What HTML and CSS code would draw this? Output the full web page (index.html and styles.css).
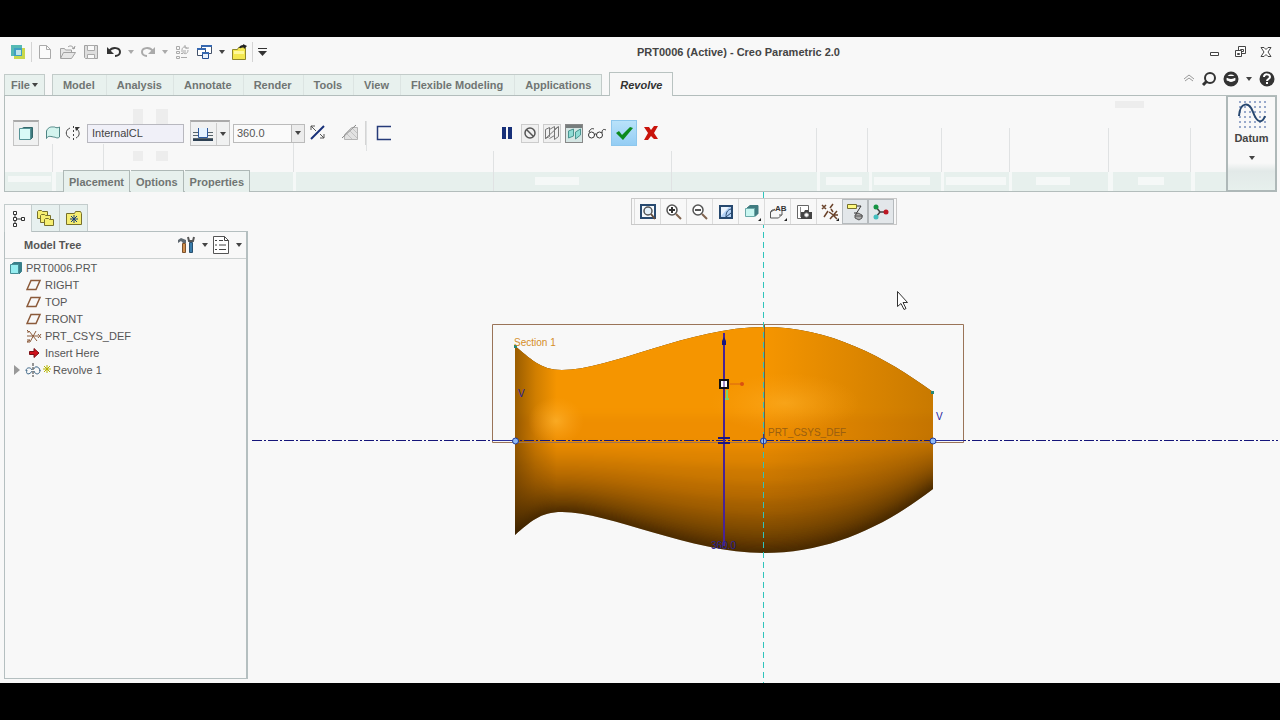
FILE: index.html
```html
<!DOCTYPE html>
<html lang="en">

<head>
  <meta charset="UTF-8">
  <meta name="viewport" content="width=device-width, initial-scale=1.0">
  <title>PRT0006 (Active) - Creo Parametric 2.0</title>
  <link rel="stylesheet" href="styles.css">
</head>

<body>
  <div class="app">

    <header class="title-bar">
      <div class="quick-access">
        <button class="icon-btn" aria-label="Application menu">
          <svg width="16" height="16" viewBox="0 0 16 16"><path fill="#55b9b4" d="M1 1h11v11H1z" /><path fill="#c8d84c" d="M12 4h3v11H4v-3h8z" /><path fill="#3f9fc4" d="M4 4h8v8H4z" /><path fill="#bfe4ea" d="M6 6h5v5H6z" /></svg>
        </button>
        <span class="divider"></span>
        <button class="icon-btn" aria-label="New">
          <svg width="16" height="16" viewBox="0 0 16 16"><path fill="#fbfbfb" stroke="#aaa" d="M2.500 1.500h7l4 4v9h-11z" /><path fill="none" stroke="#aaa" d="M9.500 1.500v4h4" /></svg>
        </button>
        <button class="icon-btn" aria-label="Open">
          <svg width="18" height="16" viewBox="0 0 18 16"><path fill="#e6e6e6" stroke="#a2a2a2" d="M1.500 14V4.500h4l1 1.500h6v3M1.500 14.500l3-6h12l-4 6z" /><path fill="none" stroke="#999" d="M9 3c2-2 5-1 6 2M13 4l2 1 1-3" /></svg>
        </button>
        <button class="icon-btn" aria-label="Save">
          <svg width="16" height="16" viewBox="0 0 16 16"><path fill="#dedede" stroke="#a2a2a2" d="M1.500 1.500h13v13h-12l-1-1z" /><path fill="#fafafa" stroke="#aaa" d="M4.500 1.500h7v5h-7zM4.500 10.500h7v4h-7z" /></svg>
        </button>
        <button class="icon-btn" aria-label="Undo">
          <svg width="16" height="16" viewBox="0 0 16 16"><path fill="none" stroke="#333" stroke-width="2" d="M3 7c4-5 11-3 11 1 0 2-2 4-5 4" /><path fill="#333" d="M1 3v7h7z" /></svg>
        </button>
        <button class="caret muted" aria-label="Undo list"></button>
        <button class="icon-btn" aria-label="Redo">
          <svg width="16" height="16" viewBox="0 0 16 16"><path fill="none" stroke="#aaa" stroke-width="2" d="M13 7C9 2 2 4 2 8c0 2 2 4 5 4" /><path fill="#aaa" d="M15 3v7H8z" /></svg>
        </button>
        <button class="caret muted" aria-label="Redo list"></button>
        <button class="icon-btn" aria-label="Regenerate">
          <svg width="16" height="16" viewBox="0 0 16 16"><path fill="none" stroke="#aaa" d="M2.500 2.500h3v3h-3zM2.500 7.500h3v2h-3zM2.500 12.500h3v2h-3zM7 13.500h6M7 9.500h2M8 6c0-4 5-4 5-1M14 6c0 5-5 4-5 2M11 4h4M7 7h3M11 1v3M11 9V6" /></svg>
        </button>
        <button class="icon-btn" aria-label="Windows">
          <svg width="18" height="16" viewBox="0 0 18 16"><path fill="#fff" stroke="#44536b" d="M5.500 1.500h10v8h-10z" /><path fill="#3668b0" d="M5 1h11v2H5z" /><path fill="#fff" stroke="#44536b" d="M1.500 4.500h8v7h-8z" /><path fill="#3668b0" d="M1 4h9v2H1z" /><path fill="#e9f1fb" stroke="#264f94" d="M6.500 8.500h6v6h-6z" /><path fill="#3668b0" d="M6 8h7v2H6z" /></svg>
        </button>
        <button class="caret" aria-label="Windows list"></button>
        <button class="icon-btn" aria-label="Close window">
          <svg width="17" height="17" viewBox="0 0 17 17"><path fill="#f4e84f" stroke="#8e862b" d="M1.500 5.500h5l1-2h7v12h-13z" /><path fill="#fff99a" d="M3 7h10v3H3z" /><path fill="none" stroke="#222" stroke-width="2" d="M9 4c1-3 3-2 5-2" /><path fill="#222" d="M12 0l4 2-3 3z" /></svg>
        </button>
        <span class="divider"></span>
        <button class="customize" aria-label="Customize toolbar">
          <svg width="9" height="8" viewBox="0 0 9 8"><path stroke="#333" d="M0 .500h9" /><path fill="#333" d="M0 3h9L4.500 8z" /></svg>
        </button>
      </div>
      <h1 class="title">PRT0006 (Active) - Creo Parametric 2.0</h1>
      <div class="window-controls">
        <button class="icon-btn" aria-label="Minimize">
          <svg width="12" height="12" viewBox="0 0 12 12"><path fill="#fff" stroke="#444" d="M2.500 6.500h8v3h-8z" /></svg>
        </button>
        <button class="icon-btn" aria-label="Restore">
          <svg width="12" height="12" viewBox="0 0 12 12"><path fill="#fff" stroke="#444" d="M4.500.500h7v7h-7zM6.500 3.500h3v2h-3z" /><path fill="#fff" stroke="#444" d="M1.500 4.500h6v6h-6zM3.500 7.500h2v1h-2z" /></svg>
        </button>
        <button class="icon-btn" aria-label="Close">
          <svg width="12" height="12" viewBox="0 0 12 12"><path fill="#fff" stroke="#444" d="M1 1.500h3l2 2 2-2h3L8 6l3 4.500H8l-2-2-2 2H1L4 6z" /></svg>
        </button>
      </div>
    </header>

    <div class="ribbon-tabs">
      <button class="tab file-tab">File<i class="caret"></i></button>
      <nav class="tab-group">
        <button class="tab">Model</button>
        <button class="tab">Analysis</button>
        <button class="tab">Annotate</button>
        <button class="tab">Render</button>
        <button class="tab">Tools</button>
        <button class="tab">View</button>
        <button class="tab">Flexible Modeling</button>
        <button class="tab">Applications</button>
      </nav>
      <button class="tab active">Revolve</button>
      <div class="help-tools">
        <button class="icon-btn" aria-label="Minimize ribbon">
          <svg width="12" height="12" viewBox="0 0 12 12"><path fill="none" stroke="#999" d="M1 6l5-4 5 4M2 8l4-3 4 3" /></svg>
        </button>
        <button class="icon-btn" aria-label="Search">
          <svg width="16" height="16" viewBox="0 0 16 16"><circle cx="9" cy="7" r="5" fill="none" stroke="#333" stroke-width="2" /><path stroke="#333" stroke-width="3" d="M6 10l-4 4" /></svg>
        </button>
        <button class="icon-btn" aria-label="Learning center">
          <svg width="16" height="16" viewBox="0 0 16 16"><circle cx="8" cy="8" r="6" fill="#fff" stroke="#333" stroke-width="3" /><path fill="#333" d="M2 5h12v2c-3-1-3 1-6 1S5 6 2 7zM3 10c3-1 3 1 5 1s3-2 5-1l-3 4H5z" /></svg>
        </button>
        <button class="caret" aria-label="Learning list"></button>
        <button class="icon-btn" aria-label="Help">
          <svg width="16" height="16" viewBox="0 0 16 16"><circle cx="8" cy="8" r="7.500" fill="#333" /><path fill="none" stroke="#fff" stroke-width="2" d="M5 6c0-4 6-3 6 0 0 2-3 2-3 4" /><path fill="#fff" d="M7 11h2v2H7z" /></svg>
        </button>
      </div>
    </div>

    <section class="ribbon">
      <!-- faded group separators behind the dashboard -->
      <svg class="ribbon-ghost" viewBox="0 0 1272 95" preserveAspectRatio="none" aria-hidden="true">
        <g fill="#ededed"><path d="M128 13h10v18h-10zM151 13h12v18h-12zM128 55h10v10h-10zM151 55h12v10h-12zM1110 5h29v7h-29z" /></g>
        <g stroke="#e0e2e3"><path d="M47.500 48v28M98.500 48v28M288.500 34v42M361.500 25v30M488.500 55v40M666.500 55v40M811.500 32v44M862.500 32v44M936.500 32v44M1004.500 32v44M1103.500 32v44M1185.500 32v44" /></g>
        <g fill="#f5f8f7"><path d="M3 80h43v6H3zM530 81h44v8h-44zM821 81h36v8h-36zM869 81h56v8h-56zM941 81h60v8h-60zM1031 81h34v8h-34zM1133 81h26v8h-26zM47 76h4v19h-4zM288 76h3v19h-3zM812 76h3v19h-3zM864 76h3v19h-3zM936 76h3v19h-3zM1004 76h3v19h-3zM1103 76h5v19h-5zM1186 76h4v19h-4z" /></g>
      </svg>
      <div class="dashboard">
        <div class="feature-tools">
          <button class="boxed" aria-label="Solid">
            <svg width="16" height="16" viewBox="0 0 16 16"><path fill="#407b80" stroke="#35686b" d="M3.500 3l2-1.500h9v10l-2 2" /><path fill="#d9fbf7" stroke="#569396" d="M1.500 2.500h11v11h-11z" /></svg>
          </button>
          <button class="icon-btn surface" aria-label="Surface">
            <svg width="16" height="16" viewBox="0 0 16 16"><path fill="#d3f4ee" stroke="#4e8584" d="M1.500 13.500V6c2-5 6-4 8-4 2 1 3 1 5 0v10c-2 2-4 0-6 0-4-1-6-1-7 1.500z" /></svg>
          </button>
          <button class="icon-btn" aria-label="Revolve type">
            <svg width="16" height="16" viewBox="0 0 16 16"><path fill="none" stroke="#444" d="M5 3C0 5 0 11 5 13M8.500 1v2m0 2v2m0 2v2m0 2v2M11 13c4-2 4-6 1-9" /><path fill="#333" d="M10 2h5l-4 4z" /></svg>
          </button>
          <input class="axis-input" type="text" value="InternalCL" aria-label="Axis of revolution">
          <div class="boxed split">
            <button class="icon-btn" aria-label="Angle option">
              <svg width="22" height="16" viewBox="0 0 22 16"><path stroke="#58666c" d="M1 6.500h5M16 6.500h5M1 9.500h5M16 9.500h5M1 12.500h20" /><path fill="#e6f3ff" stroke="#2c5aa0" d="M6.500 2v9.500h9V2" /><path stroke="#2d4053" stroke-width="2" d="M1 14h20" /></svg>
            </button>
            <button class="caret" aria-label="Angle option list"></button>
          </div>
          <div class="combo">
            <select class="angle-select" aria-label="Angle">
              <option>360.0</option>
            </select>
            <span class="combo-arrow"><i class="caret"></i></span>
          </div>
          <button class="icon-btn" aria-label="Flip direction">
            <svg width="18" height="18" viewBox="0 0 18 18"><path stroke="#173079" stroke-width="2" d="M2 15L15 2" /><path fill="none" stroke="#555" d="M2 2l5 5M2 6V2h4M11 10l4 4M15 10v4h-4" /></svg>
          </button>
          <button class="icon-btn cut" aria-label="Remove material">
            <svg width="18" height="18" viewBox="0 0 18 18"><path fill="#e2e2e2" stroke="#b5b5b5" d="M3.500 15.500v-5l7-7h6v12z" /><path stroke="#c3c3c3" d="M6 10l5 5M9 7l7 7M12 5l4 4" /><path stroke="#888" d="M1 14L15 1" /></svg>
          </button>
          <span class="divider"></span>
          <button class="icon-btn" aria-label="Thicken sketch">
            <svg width="16" height="16" viewBox="0 0 16 16"><path fill="none" stroke="#263b79" stroke-width="1.500" d="M15 1.500H1.500v13H15" /></svg>
          </button>
        </div>
        <div class="confirm-tools">
          <button class="icon-btn" aria-label="Pause">
            <svg width="14" height="14" viewBox="0 0 14 14"><path fill="#173079" d="M2 1h4v12H2zM8 1h4v12H8z" /></svg>
          </button>
          <button class="preview" aria-label="No preview">
            <svg width="16" height="16" viewBox="0 0 16 16"><circle cx="8" cy="8" r="5" fill="none" stroke="#555" stroke-width="1.500" /><path stroke="#555" stroke-width="1.500" d="M4.500 4.500l7 7" /></svg>
          </button>
          <button class="preview" aria-label="Unattached preview">
            <svg width="16" height="16" viewBox="0 0 16 16"><path fill="none" stroke="#777" d="M1.500 4.500l4-2v9l-4 2zM5.500 4.500l5-3v9l-5 3M10.500 4.500l4-3v10l-4 3zM1 14L14 2" /></svg>
          </button>
          <button class="preview selected" aria-label="Attached preview">
            <svg width="16" height="16" viewBox="0 0 16 16"><path fill="#777d7d" d="M0 0h16v3H0z" /><path fill="#8fdcd5" stroke="#4b9490" d="M2.500 6l5-2v7l-5 2zM9.500 7l5-3v6l-5 4z" /></svg>
          </button>
          <button class="icon-btn glasses" aria-label="Verify">
            <svg width="20" height="14" viewBox="0 0 20 14"><circle cx="4.500" cy="9" r="3" fill="#fff" stroke="#333" /><circle cx="12.500" cy="9" r="3" fill="#fff" stroke="#333" /><path fill="none" stroke="#333" d="M2 6c1-3 3-4 5-3M7.500 9c1-2 2-1 2 0M15 7c0-4 2-4 4-3" /></svg>
          </button>
          <button class="accept" aria-label="OK">
            <svg width="18" height="16" viewBox="0 0 18 16"><path fill="#0b8a1d" d="M1 8l3-2 3 4 8-8 3 1L8 15z" /></svg>
          </button>
          <button class="icon-btn" aria-label="Cancel">
            <svg width="16" height="16" viewBox="0 0 16 16"><path fill="#c9140c" d="M1 2h5l2 3 3-4h4l-4 7 4 6h-4l-3-3-3 4H1l4-7z" /></svg>
          </button>
        </div>
      </div>
      <div class="sub-tabs">
        <button class="sub-tab">Placement</button>
        <button class="sub-tab">Options</button>
        <button class="sub-tab">Properties</button>
      </div>
      <button class="datum">
        <svg width="28" height="28" viewBox="0 0 28 28"><path stroke="#98a9cb" stroke-width="2" stroke-dasharray="2 3" d="M1 2h27M1 7h27M1 12h27M1 17h27M1 22h27M1 27h27" /><path fill="none" stroke="#27476f" stroke-width="2" d="M1 16C2 2 11 1 15 12s9 12 12 4" /></svg>
        <span>Datum</span>
        <i class="caret"></i>
      </button>
    </section>

    <main class="workspace">
      <aside class="navigator">
        <div class="nav-tabs">
          <button class="nav-tab active" aria-label="Model Tree">
            <svg width="16" height="18" viewBox="0 0 16 18"><path fill="#fff" stroke="#333" d="M3.500 1.500h3v3h-3zM3.500 7.500h3v3h-3zM3.500 13.500h3v3h-3zM11.500 7.500h3v3h-3zM5 4.500v3M5 10.500v3M6.500 9h5" /></svg>
          </button>
          <button class="nav-tab" aria-label="Folder Browser">
            <svg width="20" height="18" viewBox="0 0 20 18"><g fill="#f6ee71" stroke="#77702b"><path d="M1.500 2.500l1-1h3l1 1h5v7h-10z" /><path d="M4.500 6.500l1-1h3l1 1h5v7h-10z" /><path d="M8.500 10.500l1-1h3l1 1h4v6h-9z" /></g></svg>
          </button>
          <button class="nav-tab" aria-label="Favorites">
            <svg width="18" height="16" viewBox="0 0 18 16"><path fill="#f6ee71" stroke="#77702b" d="M1.500 14.500v-11h8l1-2h5l1 2v11z" /><path stroke="#143c7e" d="M9 5v8M5 9h8M6 6l6 6M12 6l-6 6" /></svg>
          </button>
        </div>
        <div class="tree-panel">
          <div class="tree-header">
            <h2>Model Tree</h2>
            <button class="icon-btn" aria-label="Tree settings">
              <svg width="18" height="18" viewBox="0 0 18 18"><path fill="#5e6870" d="M1 4l3-2 5 2v3H6L4 5 1 7z" /><path fill="#d1904f" stroke="#7c522d" d="M5.500 7.500h3v9h-3z" /><path fill="#397cab" stroke="#28506f" d="M12.500 6.500h3v10h-3z" /><path fill="none" stroke="#555" stroke-width="2" d="M11 1l1 4h4l1-4" /></svg>
            </button>
            <button class="caret" aria-label="Settings list"></button>
            <button class="icon-btn" aria-label="Show">
              <svg width="16" height="18" viewBox="0 0 16 18"><path fill="#fff" stroke="#555" d="M.500.500h11l4 4v13H.500z" /><path fill="none" stroke="#444" d="M11.500.500v4h4M2 4.500h2M6 4.500h4M2 9h2M6 9h7M2 13.500h2M6 13.500h7" /></svg>
            </button>
            <button class="caret" aria-label="Show list"></button>
          </div>
          <ul class="tree">
            <li class="root">
              <svg width="14" height="14" viewBox="0 0 14 14"><path fill="#377e89" stroke="#377e89" d="M3 3l2-1.500h7.500v9L10 13" /><path fill="#95edf0" stroke="#468f97" d="M1.500 3.500h8v9h-8z" /></svg>
              PRT0006.PRT
            </li>
            <li>
              <svg width="16" height="14" viewBox="0 0 16 14"><path fill="none" stroke="#8b5a3a" stroke-width="1.500" d="M5 2.500h9l-4 9H1z" /></svg>
              RIGHT
            </li>
            <li>
              <svg width="16" height="14" viewBox="0 0 16 14"><path fill="none" stroke="#8b5a3a" stroke-width="1.500" d="M5 2.500h9l-4 9H1z" /></svg>
              TOP
            </li>
            <li>
              <svg width="16" height="14" viewBox="0 0 16 14"><path fill="none" stroke="#8b5a3a" stroke-width="1.500" d="M5 2.500h9l-4 9H1z" /></svg>
              FRONT
            </li>
            <li>
              <svg width="16" height="14" viewBox="0 0 16 14"><path fill="none" stroke="#8b5a3a" d="M1 7h11M3 2l8 10M10 2L4 13M1 1l2 2M1 3h2M1 11h3l-3 2h3M12 5l3 4M15 5l-3 4" /></svg>
              PRT_CSYS_DEF
            </li>
            <li>
              <svg width="16" height="14" viewBox="0 0 16 14"><path fill="#d0121b" stroke="#7b1015" d="M3.500 5.500H8v-3l5 4.500-5 4.500v-3H3.500z" /></svg>
              Insert Here
            </li>
            <li class="branch">
              <svg width="8" height="10" viewBox="0 0 8 10"><path fill="#999" d="M1 0l6 5-6 5z" /></svg>
              <svg width="16" height="14" viewBox="0 0 16 14"><path fill="none" stroke="#376184" d="M1 8c0-4 5-4 6-1M15 7c0 5-5 5-6 1M2 7c-2 6 4 4 5 1M9 6c1-4 6-2 6 2" /><path stroke="#333" stroke-dasharray="3 1" d="M8 0v14" /></svg>
              <svg class="new-mark" width="8" height="12" viewBox="0 0 8 12"><path stroke="#b5b400" d="M4 1v8M0 5h8M1 2l6 6M7 2L1 8" /></svg>
              Revolve 1
            </li>
          </ul>
        </div>
      </aside>

      <div class="viewport">
        <svg class="scene" viewBox="248 192 1032 491" role="img" aria-label="Revolved part">
          <defs>
            <clipPath id="body-clip">
              <path d="M515 346C530 358 540 370 562 370C610 370 690 327 764 327C830 327 885 357 933 392V489C885 526 830 553 764 553C690 553 610 512 562 512C540 512 530 522 515 535Z" />
            </clipPath>
            <path id="band" d="M480 -500H970V465L933 489C885 526 830 553 764 553C690 553 610 512 562 512C540 512 530 522 515 535L480 560Z" />
            <filter id="soft" x="-10%" y="-10%" width="120%" height="120%">
              <feGaussianBlur stdDeviation="5" />
            </filter>
            <linearGradient id="ends">
              <stop offset="0" stop-color="#2b1800" stop-opacity=".45" />
              <stop offset=".05" stop-color="#2b1800" stop-opacity=".18" />
              <stop offset=".1" stop-color="#2b1800" stop-opacity="0" />
              <stop offset=".6" stop-color="#2b1800" stop-opacity="0" />
              <stop offset="1" stop-color="#2b1800" stop-opacity=".22" />
            </linearGradient>
            <radialGradient id="glow">
              <stop offset="0" stop-color="#ffb632" stop-opacity=".7" />
              <stop offset="1" stop-color="#ffa41c" stop-opacity="0" />
            </radialGradient>
          </defs>
          <g clip-path="url(#body-clip)">
            <path fill="#462900" d="M510 320h430v240H510z" />
            <g filter="url(#soft)">
              <use href="#band" fill="#5e3600" transform="translate(0 18) scale(1 .96)" />
              <use href="#band" fill="#744400" transform="translate(0 53) scale(1 .88)" />
              <use href="#band" fill="#8b5100" transform="translate(0 97) scale(1 .78)" />
              <use href="#band" fill="#a35f00" transform="translate(0 150) scale(1 .66)" />
              <use href="#band" fill="#b96c00" transform="translate(0 212) scale(1 .52)" />
              <use href="#band" fill="#cc7800" transform="translate(0 273) scale(1 .38)" />
              <use href="#band" fill="#df8400" transform="translate(0 344) scale(1 .22)" />
              <use href="#band" fill="#ef8e00" transform="translate(0 415) scale(1 .06)" />
              <path fill="#f59500" d="M500 300h450v115H500z" />
            </g>
            <path fill="url(#ends)" d="M515 320h418v240H515z" />
            <ellipse cx="556" cy="421" rx="28" ry="24" fill="url(#glow)" />
            <ellipse cx="785" cy="403" rx="75" ry="30" fill="url(#glow)" opacity=".7" />
          </g>
          <path fill="none" stroke="#9a7458" d="M492.500 324.500h471v118h-471z" />
          <path stroke="#2fc4bc" stroke-dasharray="6 4" d="M763.500 192v491" />
          <path stroke="#806035" d="M764.500 325v116" />
          <path stroke="#15157a" stroke-dasharray="10 2 2 2" d="M252 440.500h1026" />
          <path stroke="#2b2f9a" d="M492 440.500h24M933 440.500h31" />
          <path stroke="#4a2392" stroke-width="2" d="M724 333v213" />
          <path fill="#1a1680" d="M724 337l2 4v4h-4v-4z" />
          <path stroke="#1a1680" stroke-width="2" d="M718 438h12M718 443h12" />
          <path fill="#fff" stroke="#111" stroke-width="2" d="M720 380h8v8h-8z" />
          <path stroke="#4a2392" d="M724 381v6" />
          <path stroke="#da6412" d="M730 384h12" />
          <circle cx="742" cy="384" r="2" fill="#da5010" />
          <path stroke="#7ed36b" stroke-width="2" d="M727 390v10M725 399h4" />
          <g fill="#8fb9f4" stroke="#203b98">
            <circle cx="515.500" cy="441" r="3" />
            <circle cx="763.500" cy="441" r="3" />
            <circle cx="933" cy="441" r="3" />
            <path d="M763.500 434v14" />
          </g>
          <path fill="#278879" d="M514 345h3v3h-3zM931 391h3v3h-3z" />
          <text class="label-section" x="514" y="346">Section 1</text>
          <text class="label-csys" x="768" y="436">PRT_CSYS_DEF</text>
          <text class="label-blue" x="518" y="397">V</text>
          <text class="label-blue" x="936" y="420">V</text>
          <text class="label-blue" x="711" y="549">360.0</text>
          <path fill="#fff" stroke="#333" d="M897.500 291.500v15l3.500-3 3 6 2-1-3-6h4.500z" />
        </svg>

        <div class="view-toolbar">
          <button aria-label="Refit">
            <svg width="18" height="18" viewBox="0 0 18 18"><path fill="#f5f9fc" stroke="#27496f" stroke-width="2" d="M2 2h14v13H2z" /><circle cx="9" cy="8" r="4" fill="#e5f2fb" stroke="#555" stroke-width="1.500" /><path stroke="#644c3c" stroke-width="2" d="M12 11l4 5" /></svg>
          </button>
          <button aria-label="Zoom in">
            <svg width="18" height="18" viewBox="0 0 18 18"><circle cx="7" cy="7" r="5" fill="#fff" stroke="#555" stroke-width="1.500" /><path stroke="#333" stroke-width="2" d="M4 7h6M7 4v6" /><path stroke="#80644f" stroke-width="2" d="M11 11l5 5" /></svg>
          </button>
          <button aria-label="Zoom out">
            <svg width="18" height="18" viewBox="0 0 18 18"><circle cx="7" cy="7" r="5" fill="#fff" stroke="#555" stroke-width="1.500" /><path stroke="#555" stroke-width="2" d="M4 7h6" /><path stroke="#80644f" stroke-width="2" d="M11 11l5 5" /></svg>
          </button>
          <button aria-label="Repaint">
            <svg width="16" height="16" viewBox="0 0 16 16"><path fill="#b4d2f6" stroke="#27496f" stroke-width="2" d="M2 2h12v12H2z" /><path fill="#eaf3fd" d="M3 3h8L3 12z" /><path fill="none" stroke="#27496f" d="M13 5c-4 1-5 4-5 8M8 13l5-4" /></svg>
          </button>
          <button aria-label="Display style">
            <svg width="18" height="18" viewBox="0 0 18 18"><path fill="#407b80" stroke="#407b80" d="M4 5l3-2.500h8v8l-3 3" /><path fill="#c9f6f1" stroke="#6aa9a9" d="M2.500 5.500h9v8h-9z" /><path fill="#222" d="M18 15v3h-3z" /></svg>
          </button>
          <button aria-label="Saved orientations">
            <svg width="18" height="18" viewBox="0 0 18 18"><path fill="none" stroke="#555" d="M6 7H3L1.500 9v6h8l3-3M2 9l4-3M13 8v4h-3" /><text x="6" y="8" class="icon-text">AB</text><path fill="#222" d="M18 15v3h-3z" /></svg>
          </button>
          <button aria-label="View manager">
            <svg width="18" height="18" viewBox="0 0 18 18"><path fill="#fff" stroke="#666" d="M2.500 2.500h11v13h-11z" /><path stroke="#888" d="M5.500 4v10" /><path fill="#444" d="M6 9h3l1-2h3l1 2h3v7H6z" /><circle cx="11.500" cy="12" r="2" fill="#fff" stroke="#aaa" /></svg>
          </button>
          <button aria-label="Datum display">
            <svg width="18" height="18" viewBox="0 0 18 18"><path fill="none" stroke="#6a422a" stroke-width="1.500" d="M1 2l4 4M5 2L1 6M12 1L9 5M7 8l-4 6M8 9l3 2 5 5M16 8l-7 8M10 6l2 3M13 12h4" /><path fill="#222" d="M18 15v3h-3z" /></svg>
          </button>
          <button class="on" aria-label="Annotation display">
            <svg width="18" height="18" viewBox="0 0 18 18"><path fill="#fffa80" stroke="#77702b" d="M1.500 1.500h9v4h-9z" /><path fill="none" stroke="#333" d="M11 3h4l-5 8M8 10h3" /><path fill="#aaa" stroke="#555" d="M9 12l3-2 4 2v3l-3 2-4-2zM9 13h8" /></svg>
          </button>
          <button class="on" aria-label="Spin center">
            <svg width="18" height="18" viewBox="0 0 18 18"><path fill="none" stroke="#444" stroke-width="1.500" d="M4 4l4 5h6M8 9l-4 5" /><circle cx="4" cy="4" r="2.500" fill="#159444" /><circle cx="4" cy="14" r="2.500" fill="#42bebe" /><circle cx="14" cy="9" r="2.500" fill="#bc1723" /></svg>
          </button>
        </div>
      </div>
    </main>
  </div>
</body>

</html>
```
FILE: styles.css
```css
* {
  box-sizing: border-box;
  margin: 0;
  padding: 0;
}

body {
  font-family: "Liberation Sans", Arial, sans-serif;
  font-size: 11px;
  line-height: 16px;
  color: #555;
  background-color: #000;
  min-height: 100vh;
  padding: 37px 0;
  display: flex;
}

button {
  font: inherit;
  color: inherit;
  background: none;
  border: none;
}

svg {
  display: block;
  flex-shrink: 0;
}

.app {
  flex: 1;
  display: flex;
  flex-direction: column;
  background-color: #f8f8f8;
}

.icon-btn {
  display: flex;
  align-items: center;
  justify-content: center;
}

/* small triangle of the drop-down buttons */
.caret {
  display: flex;
  justify-content: center;
  width: 10px;
}

.caret::before {
  content: "";
  border: 3px solid transparent;
  border-top: 4px solid #444;
  border-bottom: none;
}

.caret.muted::before {
  border-top-color: #aaa;
}

.divider {
  width: 1px;
  height: 20px;
  background-color: #d4d4d4;
}

/* Title bar */
.title-bar {
  display: flex;
  align-items: center;
  height: 30px;
  padding: 0 8px;
}

.quick-access {
  display: flex;
  align-items: center;
  gap: 3px;
}

.quick-access .icon-btn {
  width: 20px;
  height: 20px;
}

.quick-access .caret {
  width: 8px;
}

.customize {
  padding: 0 2px;
}

.title {
  flex: 1;
  text-align: center;
  font-size: 11px;
  color: #444;
}

.window-controls {
  display: flex;
  gap: 14px;
}

/* Ribbon tabs */
.ribbon-tabs {
  display: flex;
  align-items: flex-end;
  height: 28px;
  padding: 0 4px;
}

.tab {
  height: 20px;
  padding: 0 10px;
  font-weight: bold;
  color: #707573;
  white-space: nowrap;
}

.tab-group {
  display: flex;
  gap: 1px;
  margin: 0 7px;
  background-color: #e8f1ee;
  border: 1px solid #c2cbc9;
  border-bottom: none;
}

.tab-group .tab + .tab {
  border-left: 1px solid #dce4e2;
}

.file-tab {
  display: flex;
  align-items: center;
  height: 21px;
  padding: 0 4px 0 6px;
  background-color: #e8f1ee;
  border: 1px solid #c2cbc9;
  border-bottom: none;
}

.tab.active {
  position: relative;
  z-index: 1;
  height: 24px;
  margin-bottom: -1px;
  font-style: italic;
  color: #333;
  background-color: #f8f8f8;
  border: 1px solid #b9c3c1;
  border-bottom: none;
}

.help-tools {
  display: flex;
  align-items: center;
  gap: 6px;
  margin-left: auto;
  padding: 0 1px 8px 0;
}

.help-tools .caret {
  margin: 0 -1px;
}

/* Ribbon */
.ribbon {
  position: relative;
  display: grid;
  grid-template-columns: 1fr 51px;
  grid-template-rows: 74px 22px;
  height: 97px;
  margin: 0 3px 0 4px;
  border: 1px solid #b3bdbc;
  border-right: none;
  background: linear-gradient(#f8f8f8 76px, #e7f0ed 76px);
}

.ribbon-ghost {
  position: absolute;
  width: 100%;
  height: 100%;
}

.dashboard {
  position: relative;
  display: flex;
  align-items: center;
  padding-left: 8px;
}

.feature-tools,
.confirm-tools {
  display: flex;
  align-items: center;
}

.feature-tools {
  gap: 4px;
}

.surface {
  margin-left: 2px;
}

.confirm-tools {
  gap: 4px;
  margin-left: 108px;
}

.boxed {
  display: flex;
  align-items: center;
  justify-content: center;
  width: 26px;
  height: 26px;
  background-color: #f0f1f1;
  border: 1px solid #c4c4c4;
  border-top: 2px solid #aaa;
}

.boxed.split {
  width: 40px;
  margin-left: 2px;
}

.split .caret {
  width: 13px;
  margin-left: 2px;
  border-left: 1px solid #ccc;
  height: 22px;
  align-items: center;
}

.axis-input {
  width: 97px;
  height: 19px;
  margin-left: 2px;
  padding: 0 4px;
  font: inherit;
  color: #444;
  background-color: #f0f0f8;
  border: 1px solid #b8b8bf;
}

.combo {
  display: grid;
  grid-template-columns: 1fr 13px;
  width: 72px;
  height: 19px;
  margin-left: -1px;
  border: 1px solid #bbb;
}

.angle-select {
  grid-area: 1 / 1 / 2 / 3;
  appearance: none;
  padding: 0 3px;
  font: inherit;
  color: #555;
  background-color: #fafafa;
  border: none;
}

.combo-arrow {
  grid-area: 1 / 2 / 2 / 3;
  display: flex;
  align-items: center;
  justify-content: center;
  background-color: #ececec;
  border-left: 1px solid #bbb;
  pointer-events: none;
}

.cut {
  margin: 0 2px 0 10px;
}

.feature-tools .divider {
  height: 24px;
  margin-right: 6px;
}

.preview {
  display: flex;
  align-items: center;
  justify-content: center;
  width: 18px;
  height: 19px;
  background-color: #f0f0f0;
  border: 1px solid #ccc;
}

.preview.selected {
  background-color: #d5e6e4;
  border-color: #888;
}

.confirm-tools .icon-btn {
  margin-right: 3px;
}

.confirm-tools .glasses {
  margin-right: 0;
}

.accept {
  display: flex;
  align-items: center;
  justify-content: center;
  width: 26px;
  height: 26px;
  margin-right: 2px;
  background: linear-gradient(#b9e2fa, #94cdf4);
  border: 1px solid #8dc7ed;
}

.sub-tabs {
  position: relative;
  display: flex;
  gap: 1px;
  padding-left: 58px;
}

.sub-tab {
  padding: 0 5px;
  font-weight: bold;
  color: #707573;
  background-color: #e7f0ed;
  border: 1px solid #aeb8b6;
  border-bottom: none;
}

.sub-tab + .sub-tab {
  border-left: none;
}

.datum {
  position: relative;
  grid-area: 1 / 2 / 3 / 3;
  display: flex;
  flex-direction: column;
  align-items: center;
  gap: 2px;
  padding-top: 3px;
  font-weight: bold;
  color: #444;
  background: linear-gradient(#f8f8f8 66px, #e2e9e8 74px, #e7f0ed);
  border: 1px solid #aeb8b8;
  border-width: 1px 2px 2px;
}

.datum .caret {
  margin-top: 8px;
}

/* Workspace */
.workspace {
  flex: 1;
  display: flex;
}

.navigator {
  display: flex;
  flex-direction: column;
  width: 248px;
  padding: 12px 0 4px 4px;
}

.nav-tabs {
  display: flex;
}

.nav-tab {
  display: flex;
  align-items: center;
  justify-content: center;
  width: 28px;
  height: 28px;
  background-color: #e7f0ef;
  border: 1px solid #c3cccc;
  border-left: none;
}

.nav-tab.active {
  position: relative;
  z-index: 1;
  background-color: #f8f8f8;
  border-left: 1px solid #c3cccc;
  border-bottom: none;
}

.tree-panel {
  flex: 1;
  margin-top: -1px;
  border: 1px solid #b5bfc0;
  border-right-width: 2px;
}

.tree-header {
  display: flex;
  align-items: center;
  gap: 5px;
  height: 27px;
  padding: 0 2px 0 19px;
  border-bottom: 1px solid #ccd1d1;
}

.tree-header .icon-btn {
  margin-left: -2px;
}

.tree-header h2 {
  flex: 1;
  font-size: 11px;
}

.tree {
  list-style: none;
}

.tree li {
  display: flex;
  align-items: center;
  gap: 3px;
  height: 17px;
  padding-left: 21px;
}

.tree .root {
  padding-left: 4px;
}

.tree .branch {
  gap: 2px;
  padding-left: 8px;
}

.tree .branch svg + svg {
  margin-left: 2px;
}

.tree .branch .new-mark {
  margin-left: 0;
}

.viewport {
  position: relative;
  flex: 1;
}

.scene {
  position: absolute;
  width: 100%;
  height: 100%;
}

.view-toolbar {
  position: relative;
  display: flex;
  width: fit-content;
  height: 27px;
  margin: 6px auto 0;
  padding: 0 2px;
  background-color: #f8f8f8;
  border: 1px solid #c9c9c9;
}

.view-toolbar button {
  display: flex;
  align-items: center;
  justify-content: center;
  width: 26px;
  border-left: 1px solid #dcdcdc;
}

.view-toolbar button.on {
  background-color: #e3e7ea;
  border: 1px solid #b5babd;
}

.label-section {
  font-size: 10px;
  fill: #d58d27;
}

.label-csys {
  font-size: 10px;
  fill: #9a5f10;
}

.label-blue {
  font-size: 10px;
  fill: #25209a;
}

.icon-text {
  font-size: 8px;
  font-weight: bold;
  fill: #333;
}
```
